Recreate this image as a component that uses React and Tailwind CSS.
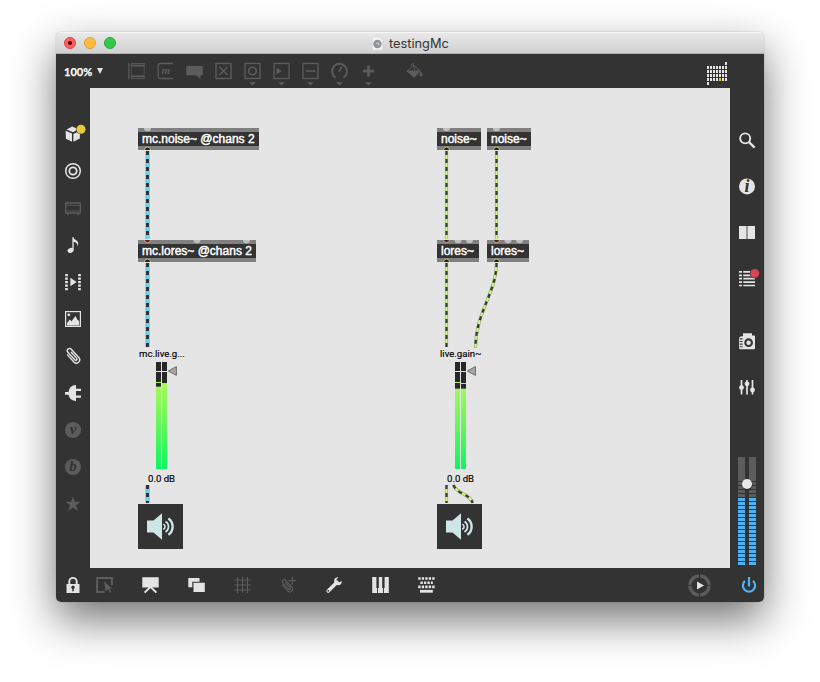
import clsx from "clsx"

const GREEN = { edge: "#8f9d72", light: "#d6f97e", dark: "#343a33", width: 2.2 }
const BLUE = { edge: "#6f9aa8", light: "#6dd2f5", dark: "#2c3639", width: 3 }

const cables = [
    { d: "M147.5 151V239", ...BLUE },
    { d: "M147.5 263V347", ...BLUE },
    { d: "M147.5 485V503", ...BLUE },
    { d: "M446.5 151V239", ...GREEN },
    { d: "M496.5 151V239", ...GREEN },
    { d: "M446.5 263V347", ...GREEN },
    { d: "M496.5 263C496.5 293 475.5 312 475.5 348", ...GREEN },
    { d: "M446.5 485V503", ...GREEN },
    { d: "M453.5 485C456 494 471 494 472.5 503", ...GREEN },
]

function Icon({ w = 16, h = 16, className, children }) {
    return (
        <svg width={w} height={h} viewBox={`0 0 ${w} ${h}`} className={clsx("block shrink-0 overflow-visible", className)} fill="none">
            {children}
        </svg>
    )
}

/* ---------- top toolbar ---------- */

function Tool({ menu, children }) {
    return (
        <div className="flex w-[29px] justify-center pt-2 text-[#5c5c5c]">
            <Icon w={17} h={26}>
                {children}
                {menu && <path d="M5.2 20.3h6.6l-3.3 3.2z" fill="currentColor" />}
            </Icon>
        </div>
    )
}

function Frame() {
    return <rect x="1" y="1.5" width="15" height="15" stroke="currentColor" strokeWidth="1.3" />
}

function MatrixIcon() {
    const cells = [[6, 0], [0, 5]]
    for (let r = 1; r < 5; r++) {
        for (let c = 0; c < 7; c++) cells.push([c, r])
    }
    return (
        <Icon w={20} h={23}>
            {cells.map(([c, r]) => (
                <rect key={c + "-" + r} x={c * 3} y={r * 4} width="2" height="3" fill={c === 4 && r === 4 ? "#e8c52e" : "#e4e4e4"} />
            ))}
        </Icon>
    )
}

function Toolbar() {
    return (
        <div className="flex h-[34px] shrink-0 bg-[#333]">
            <div className="flex w-[66px] items-center pl-2 text-white">
                <span className="w-[33px] font-['Lato',sans-serif] text-[11px] font-bold leading-none [-webkit-text-stroke:0.25px_white]">100%</span>
                <Icon w={7} h={6}>
                    <path d="M0 0h6l-3 6z" fill="#e4e4e4" />
                </Icon>
            </div>
            <Tool>
                <path d="M0.9 1v16" stroke="currentColor" strokeWidth="1.2" />
                <path d="M3 1.6h13.8M3 16.4h13.8" stroke="currentColor" strokeWidth="0.9" />
                <path d="M3 3.6h13.6M3 14.2h13.6" stroke="currentColor" strokeWidth="1.6" />
                <path d="M3.4 1.5v15M16.2 1.5v15" stroke="currentColor" strokeWidth="0.6" />
            </Tool>
            <Tool>
                <path d="M16 1.5H3Q1.5 1.5 1.2 3.2V14.7Q1.4 16.5 3 16.5H16" stroke="currentColor" strokeWidth="1.3" />
                <text x="4.5" y="12.4" fontSize="11" fontStyle="italic" fontWeight="bold" fontFamily="Liberation Serif, serif" fill="currentColor">m</text>
            </Tool>
            <Tool>
                <path d="M0.3 4h16.5v9.3H14.6V17L10 13.3H0.3z" fill="currentColor" />
            </Tool>
            <Tool>
                <Frame />
                <path d="M4.5 5l8 8M12.5 5l-8 8" stroke="currentColor" strokeWidth="1.4" />
            </Tool>
            <Tool menu>
                <Frame />
                <circle cx="8.5" cy="9" r="3.8" stroke="currentColor" strokeWidth="1.6" />
            </Tool>
            <Tool menu>
                <Frame />
                <path d="M3.4 5.7l5.4 3.3-5.4 3.3z" fill="currentColor" />
            </Tool>
            <Tool menu>
                <Frame />
                <path d="M3.5 9h10" stroke="currentColor" strokeWidth="1.5" />
            </Tool>
            <Tool menu>
                <path d="M4.6 15.7a7.5 7.5 0 1 1 7.8 0" stroke="currentColor" strokeWidth="1.9" />
                <path d="M8 9.8L10.8 4.6" stroke="currentColor" strokeWidth="1.7" />
            </Tool>
            <Tool menu>
                <path d="M8.5 3.5v11.2M2.9 9.1h11.2" stroke="currentColor" strokeWidth="2.6" />
            </Tool>
            <div className="ml-[17px] flex">
                <Tool>
                    <path d="M7.6 3.2L14.3 9 8 15.2 1 9z" stroke="currentColor" strokeWidth="1" />
                    <path d="M0.6 8.6h14L8 15.8z" fill="currentColor" />
                    <path d="M4.6 3.6L7.2 1.4 8.6 8" stroke="currentColor" strokeWidth="1" />
                    <path d="M14.8 9.2q2.6 3.8 1.4 4.8t-2.6 0q-.6-1.6 1.2-4.8z" fill="currentColor" />
                </Tool>
            </div>
            <div className="ml-auto pr-[37px] pt-2">
                <MatrixIcon />
            </div>
        </div>
    )
}

/* ---------- left side ---------- */

function Clip({ className }) {
    return (
        <Icon className={className}>
            <g transform="rotate(-42 8 8)" stroke="currentColor" strokeWidth="1.4" strokeLinecap="round">
                <path d="M4.7 3.5V13a3.3 3.3 0 0 0 6.6 0V1.8a2.3 2.3 0 0 0-4.6 0V12a1.3 1.3 0 0 0 2.6 0V4" />
            </g>
        </Icon>
    )
}

function RoundLetter({ letter }) {
    return (
        <Icon className="text-[#5c5c5c]">
            <circle cx="8" cy="8" r="8" fill="currentColor" />
            <text x="8" y="12.3" textAnchor="middle" fontSize="15" fontStyle="italic" fontWeight="bold" fontFamily="Liberation Serif, serif" fill="#333">{letter}</text>
        </Icon>
    )
}

function LeftBar() {
    const items = [
        <Icon>
            <path d="M7.2 0.5L13.6 3.2 8 6.3 1.6 3.6z" fill="currentColor" />
            <path d="M0.6 4.8L7 7.6v8.2L0.9 12.8z" fill="currentColor" />
            <path d="M15 4.8L8.4 7.9v7.9L14.8 12.6z" fill="currentColor" />
            <circle cx="16" cy="3.2" r="5" fill="#333" />
            <circle cx="16" cy="3.2" r="4.5" fill="#e8cb38" />
        </Icon>,
        <Icon>
            <circle cx="8" cy="8" r="7.3" stroke="currentColor" strokeWidth="1.5" />
            <circle cx="8" cy="8" r="3.7" stroke="currentColor" strokeWidth="1.8" />
        </Icon>,
        <Icon className="text-[#5c5c5c]">
            <path d="M0.7 3h14.6v10H0.7z" stroke="currentColor" strokeWidth="1.3" />
            <path d="M1.5 5.3h13M1.5 11h13" stroke="currentColor" strokeWidth="0.9" />
            <path d="M1.5 2.5h2.4M2 14h2M12 14h2" stroke="currentColor" strokeWidth="1.4" />
        </Icon>,
        <Icon>
            <ellipse cx="5.5" cy="13.4" rx="3.1" ry="2.4" transform="rotate(-22 5.5 13.4)" fill="currentColor" />
            <path d="M8 13V0.3" stroke="currentColor" strokeWidth="1.3" />
            <path d="M8 0Q8.6 2 11.6 3.4 14.6 5.4 12.2 9.6 13.4 5.6 8 4.8z" fill="currentColor" />
        </Icon>,
        <Icon>
            <path d="M1.5 0v16.4M14.5 0v16.4" stroke="currentColor" strokeWidth="2.7" strokeDasharray="2.3 1.2" />
            <path d="M5.4 3.8l6.2 4.2-6.2 4.2z" fill="currentColor" />
        </Icon>,
        <Icon>
            <rect x="0.6" y="0.6" width="14.8" height="14.8" stroke="currentColor" strokeWidth="1.2" />
            <circle cx="3.8" cy="3.8" r="1.4" fill="currentColor" />
            <path d="M2 14.4V12l2.8-3.6 1.8 1.8L10.4 5l2.2 4 1.6 1v4.4z" fill="currentColor" />
        </Icon>,
        <Clip />,
        <Icon>
            <path d="M11 0V16C6.5 15.8 4 13 3.6 9.8H0V7h3.6C4 3 6.5 0.2 11 0z" fill="currentColor" />
            <path d="M10 4.8h6M10 11.6h6" stroke="currentColor" strokeWidth="2.2" />
        </Icon>,
        <RoundLetter letter="v" />,
        <RoundLetter letter="b" />,
        <Icon className="text-[#5c5c5c]">
            <path d="M8 0.3l1.9 5.5h5.8l-4.7 3.5 1.8 5.6L8 11.5l-4.8 3.4L5 9.3 0.3 5.8h5.8z" fill="currentColor" />
        </Icon>,
    ]
    return (
        <div className="flex w-[34px] shrink-0 flex-col bg-[#333] pt-[27px] text-[#e4e4e4]">
            {items.map((item, i) => (
                <div key={i} className="flex h-[37px] items-center justify-center">{item}</div>
            ))}
        </div>
    )
}

/* ---------- right side ---------- */

function MasterMeter() {
    return (
        <Icon w={18} h={108}>
            {[0, 11].map((x) => (
                <g key={x}>
                    <rect x={x} y="0" width="7" height="40" fill="#5c5c5c" />
                    {[24, 28, 32, 36].map((y) => (
                        <rect key={y} x={x} y={y} width="7" height="1" fill="#333" />
                    ))}
                    {Array.from({ length: 17 }, (_, i) => (
                        <rect key={i} x={x} y={41 + i * 4} width="7" height="3" fill="#4db2f2" />
                    ))}
                </g>
            ))}
            <circle cx="9.4" cy="28" r="5.2" fill="#222" opacity="0.6" />
            <circle cx="9" cy="27" r="5" fill="#e8e8e8" />
        </Icon>
    )
}

function RightBar() {
    const cell = "flex h-[46px] w-full items-center justify-center"
    return (
        <div className="flex w-[34px] shrink-0 flex-col items-center bg-[#333] pt-[29px] pb-[3px] text-[#e4e4e4]">
            <div className={cell}>
                <Icon>
                    <circle cx="6.2" cy="6.4" r="5" stroke="currentColor" strokeWidth="1.9" />
                    <path d="M10 10.2l5.6 5.4" stroke="currentColor" strokeWidth="2.3" />
                </Icon>
            </div>
            <div className={cell}>
                <Icon>
                    <circle cx="8" cy="8.4" r="8" fill="currentColor" />
                    <text x="8" y="14" textAnchor="middle" fontSize="18" fontStyle="italic" fontWeight="bold" fontFamily="Liberation Serif, serif" fill="#333">i</text>
                </Icon>
            </div>
            <div className={cell}>
                <Icon>
                    <path d="M0 2h7v13H0zM9 2h7v13H9z" fill="currentColor" />
                    <path d="M7 2h2v13H7z" fill="#999" />
                </Icon>
            </div>
            <div className={cell}>
                <Icon>
                    <path d="M0 1.9h3M0 5.3h3M0 8.7h3M0 12.1h3M0 15.5h3M4.3 1.9H16M4.3 5.3H16M4.3 8.7H16M4.3 12.1H16M4.3 15.5H16" stroke="currentColor" strokeWidth="1.7" />
                    <circle cx="15.8" cy="3.4" r="5" fill="#333" />
                    <circle cx="15.8" cy="3.4" r="4.4" fill="#dc4350" />
                </Icon>
            </div>
            <div className="mt-[17px] flex h-[46px] items-center">
                <Icon>
                    <path d="M4 0.3h9v2.2h2.4l.6.8v12.2l-.8.8H1l-1-.8V4.8L2 3.3h2z" fill="currentColor" />
                    <circle cx="9.6" cy="9.7" r="3.3" stroke="#333" strokeWidth="2.1" />
                    <path d="M0.6 5.9h3M0.6 8.5h3M0.6 11.1h3M0.6 13.7h3" stroke="#333" strokeWidth="1.1" />
                </Icon>
            </div>
            <div className={cell}>
                <Icon>
                    <path d="M2.5 1v14.4M8 1v14.4M13.5 1v14.4" stroke="currentColor" strokeWidth="1.7" />
                    <circle cx="2.5" cy="8.6" r="2.4" fill="currentColor" />
                    <circle cx="8" cy="4.8" r="2.4" fill="currentColor" />
                    <circle cx="13.5" cy="11" r="2.4" fill="currentColor" />
                </Icon>
            </div>
            <div className="mt-auto">
                <MasterMeter />
            </div>
        </div>
    )
}

/* ---------- bottom bar ---------- */

function Slot({ off, children }) {
    return <div className={clsx("flex w-[46px] justify-center", off && "text-[#5c5c5c]")}>{children}</div>
}

function BottomBar() {
    return (
        <div className="flex h-[34px] shrink-0 items-center bg-[#333] text-[#e4e4e4]">
            <div className="flex w-[34px] justify-center">
                <Icon w={14}>
                    <path d="M3.3 8V4.6a3.7 3.7 0 0 1 7.4 0V8" stroke="currentColor" strokeWidth="1.9" />
                    <path d="M0.5 7h13v9h-13z" fill="currentColor" />
                    <circle cx="7" cy="10.3" r="1.7" fill="#333" />
                    <path d="M7 10v4.2" stroke="#333" strokeWidth="1.5" />
                </Icon>
            </div>
            <div className="flex w-[37px] pl-[6px] text-[#5c5c5c]">
                <Icon w={17}>
                    <path d="M8.5 14.9H1.1V1.1h14.8V8" stroke="currentColor" strokeWidth="2" />
                    <path d="M8 4.6l8.4 6.8-3.2.2 2.2 3.4-1.4.9-2-3.6-2.4 2z" fill="currentColor" />
                </Icon>
            </div>
            <Slot>
                <Icon w={17}>
                    <path d="M0.3 0.3h16.4v10.2H0.3z" fill="currentColor" />
                    <path d="M2.6 15.6L8.5 9.8l5.9 5.8" stroke="currentColor" strokeWidth="2" />
                </Icon>
            </Slot>
            <Slot>
                <Icon w={17}>
                    <path d="M0.3 1h11.2v3.8H4.3v5.4h-4z" fill="currentColor" />
                    <path d="M5.5 5.8h11.3v9.2H5.5z" fill="currentColor" />
                </Icon>
            </Slot>
            <Slot off>
                <Icon w={17}>
                    <path d="M3.5 0v16M8.5 0v16M13.5 0v16M0.5 3h16M0.5 8h16M0.5 13h16" stroke="currentColor" strokeWidth="1" />
                </Icon>
            </Slot>
            <Slot off>
                <Icon>
                    <g transform="rotate(-42 6.5 9) translate(0.2 2.6) scale(.84)" stroke="currentColor" strokeWidth="1.4" strokeLinecap="round">
                        <path d="M4.7 3.5V13a3.3 3.3 0 0 0 6.6 0V1.8a2.3 2.3 0 0 0-4.6 0V12a1.3 1.3 0 0 0 2.6 0V4" />
                    </g>
                    <path d="M12.4 0v7.4M8.7 3.7h7.4" stroke="currentColor" strokeWidth="1.3" />
                </Icon>
            </Slot>
            <Slot>
                <Icon>
                    <path d="M2.2 14L11 5.2" stroke="currentColor" strokeWidth="3.6" strokeLinecap="round" />
                    <path d="M12.4 0.3Q9 0 8.1 3L8.4 6.4 10 8l3 .2q3-.8 2.8-4.3l-2.8 1.6-2.4-.5-.2-2.5z" fill="currentColor" />
                    <circle cx="2.3" cy="13.8" r="0.9" fill="#333" />
                </Icon>
            </Slot>
            <Slot>
                <Icon w={17}>
                    <path d="M0.2 0h4.9v16H0.2zM6 0h5v16H6zM11.9 0h4.9v16h-4.9z" fill="currentColor" />
                    <path d="M4.4 0h2.4v11H4.4zM10.2 0h2.4v11h-2.4z" fill="#333" />
                </Icon>
            </Slot>
            <Slot>
                <Icon w={17}>
                    <path d="M0.2 1.5h17" stroke="currentColor" strokeWidth="2.6" strokeDasharray="2.4 1.1" />
                    <path d="M2.4 5.7h12.4" stroke="currentColor" strokeWidth="2.6" strokeDasharray="2.4 1.1" />
                    <path d="M0.2 9.9h17" stroke="currentColor" strokeWidth="2.6" strokeDasharray="2.4 1.1" />
                    <path d="M2 14.3h12.8" stroke="currentColor" strokeWidth="2.8" />
                </Icon>
            </Slot>
            <div className="ml-auto flex items-center gap-[30px] pr-[7px]">
                <Icon w={23} h={23}>
                    <circle cx="11.5" cy="11.5" r="9.6" stroke="#5c5c5c" strokeWidth="3.4" />
                    <path d="M11.5 0v4M11.5 19v4M0 11.5h4M19 11.5h4" stroke="#333" strokeWidth="1.2" />
                    <path d="M9 7.5l7 4-7 4z" fill="currentColor" />
                </Icon>
                <Icon className="text-[#4db2f2]">
                    <path d="M4 3.9a6.1 6.1 0 1 0 8 0" stroke="currentColor" strokeWidth="2.1" />
                    <path d="M8 0v9.5" stroke="currentColor" strokeWidth="2.2" />
                </Icon>
            </div>
        </div>
    )
}

/* ---------- patcher objects ---------- */

// inlets / outlet offsets are measured from the left edge of the box
function PatchObject({ text, width, inlets, wired, className }) {
    return (
        <div className={clsx("absolute h-[22px]", className)}>
            <div className="h-1 bg-[#808080]" />
            <div className="flex h-[14px] items-center bg-[#333] pl-1">
                <span className="whitespace-nowrap font-['Liberation_Sans',Arial,sans-serif] text-[12px] leading-[14px] text-white [-webkit-text-stroke:0.45px_white]">
                    {text}
                </span>
            </div>
            <div className="h-1 bg-[#808080]" />
            <svg width={width} height="22" className="absolute left-0 top-0">
                {inlets.map((x, i) =>
                    wired && i === 0 ? (
                        <path key={x} d={`M${x - 3} 0a3 2.7 0 0 0 6 0`} fill="#333" stroke="#f0938a" />
                    ) : (
                        <path key={x} d={`M${x - 3.5} 0a3.5 3.3 0 0 0 7 0z`} fill="#c0c0c0" />
                    )
                )}
                <path d="M6.5 22a3 3 0 0 1 6 0" fill="#222" stroke="#c9d13a" />
            </svg>
        </div>
    )
}

function GainSlider({ name, levels, peaks, className }) {
    return (
        <div className={clsx("absolute w-[47px] font-['Roboto',sans-serif] text-black", className)}>
            <div className="whitespace-nowrap text-[9.6px] leading-[14px] [-webkit-text-stroke:0.15px_black]">{name}</div>
            <svg width="47" height="107" className="mt-[1px] block">
                <defs>
                    <linearGradient id="level" gradientUnits="userSpaceOnUse" x1="0" y1="20" x2="0" y2="107">
                        <stop offset="0" stopColor="#acf85e" />
                        <stop offset="0.5" stopColor="#65f65c" />
                        <stop offset="1" stopColor="#0cf662" />
                    </linearGradient>
                </defs>
                {[17, 23].map((x, i) => (
                    <g key={x}>
                        <rect x={x} y="0" width="5" height="107" fill="#282828" />
                        <rect x={x} y={levels[i]} width="5" height={107 - levels[i]} fill="url(#level)" />
                        <rect x={x} y={levels[i] - 1} width="5" height="1" fill="#5b6b46" />
                        <rect x={x} y={peaks[i]} width="5" height="1" fill="#a8f35c" />
                    </g>
                ))}
                <rect x="17" y="9" width="11" height="1" fill="#e8e8e8" />
                <path d="M29.3 9L37.4 4.6v8.8z" fill="#a6a6a6" stroke="#6f6f6f" />
            </svg>
            <div className="mt-[3px] pl-[9px] text-[9.6px] leading-[14px] [-webkit-text-stroke:0.15px_black]">0.0 dB</div>
        </div>
    )
}

function Dac({ className }) {
    return (
        <div className={clsx("absolute flex size-[45px] bg-[#333]", className)}>
            <Icon w={45} h={45}>
                <path d="M9 16.5h6.5L24 9.2v26.6L15.5 28.5H9z" fill="#cee6e8" />
                <path d="M25.2 20.3a2.6 2.6 0 0 1 0 5" stroke="#cee6e8" strokeWidth="1.6" />
                <path d="M27.5 17.5a6 6 0 0 1 0 10.4" stroke="#cee6e8" strokeWidth="1.7" />
                <path d="M30.4 14.6a9.9 9.9 0 0 1 0 16.2" stroke="#cee6e8" strokeWidth="2.4" />
            </Icon>
        </div>
    )
}

function Patcher() {
    return (
        <div className="relative w-[640px] shrink-0 bg-[#e5e5e5]">
            <PatchObject text="mc.noise~ @chans 2" width={121} inlets={[9.5]} className="left-12 top-10 w-[121px]" />
            <PatchObject text="mc.lores~ @chans 2" width={118} inlets={[9.5, 59, 108.5]} wired className="left-12 top-[152px] w-[118px]" />
            <PatchObject text="noise~" width={44} inlets={[9.5]} className="left-[347px] top-10 w-11" />
            <PatchObject text="noise~" width={44} inlets={[9.5]} className="left-[397px] top-10 w-11" />
            <PatchObject text="lores~" width={42} inlets={[9.5, 21, 32.5]} wired className="left-[347px] top-[152px] w-[42px]" />
            <PatchObject text="lores~" width={42} inlets={[9.5, 21, 32.5]} wired className="left-[397px] top-[152px] w-[42px]" />
            <GainSlider name="mc.live.g..." levels={[25, 22]} peaks={[20, 21]} className="left-[49px] top-[259px]" />
            <GainSlider name={<span className="pl-[2px]">live.gain~</span>} levels={[27, 27]} peaks={[20, 21]} className="left-[348px] top-[259px]" />
            <Dac className="left-12 top-[416px]" />
            <Dac className="left-[347px] top-[416px]" />
            <svg width="640" height="480" viewBox="90 88 640 480" fill="none" className="absolute left-0 top-0">
                {cables.map((c) => (
                    <g key={c.d}>
                        <path d={c.d} stroke={c.edge} strokeWidth={c.width + 0.9} />
                        <path d={c.d} stroke={c.light} strokeWidth={c.width - 0.2} />
                        <path d={c.d} stroke={c.dark} strokeWidth={c.width} strokeDasharray="4 4" />
                    </g>
                ))}
            </svg>
        </div>
    )
}

function TitleBar() {
    return (
        <div className="flex h-[22px] shrink-0 items-center border-b border-[#b1b1b1] bg-linear-to-b from-[#e9e9e9] to-[#d0d0d0] pl-2 shadow-[inset_0_1px_0_#f6f6f6]">
            <div className="flex gap-2">
                <div className="flex size-3 items-center justify-center rounded-full border border-[#e0443e] bg-[#fc605c]">
                    <div className="size-1 rounded-full bg-[#4d0000]" />
                </div>
                <div className="size-3 rounded-full border border-[#dea034] bg-[#fdbc40]" />
                <div className="size-3 rounded-full border border-[#27aa35] bg-[#34c84a]" />
            </div>
            <div className="ml-[256px] flex items-center gap-[6px] pt-[3px]">
                <Icon w={11} h={14}>
                    <path d="M0.5 0h7l3 3v10h-10z" fill="#f3f3f3" stroke="#dcdcdc" strokeWidth="0.6" />
                    <circle cx="5.4" cy="7" r="4.2" fill="#8f959b" />
                    <path d="M4 6.2h2.6v2" stroke="#c9cdd0" strokeWidth="1.1" />
                </Icon>
                <span className="font-['Inter',sans-serif] text-[12.8px] leading-none text-[#333]">testingMc</span>
            </div>
        </div>
    )
}

export default function App() {
    return (
        <div className="h-[682px] w-[820px] overflow-hidden bg-white pl-14 pt-8">
            <div className="flex h-[570px] w-[708px] flex-col overflow-hidden rounded-[5px] shadow-[0_0_1px_rgba(0,0,0,0.5),0_18px_44px_rgba(0,0,0,0.55)]">
                <TitleBar />
                <Toolbar />
                <div className="flex h-[480px] shrink-0">
                    <LeftBar />
                    <Patcher />
                    <RightBar />
                </div>
                <BottomBar />
            </div>
        </div>
    )
}
